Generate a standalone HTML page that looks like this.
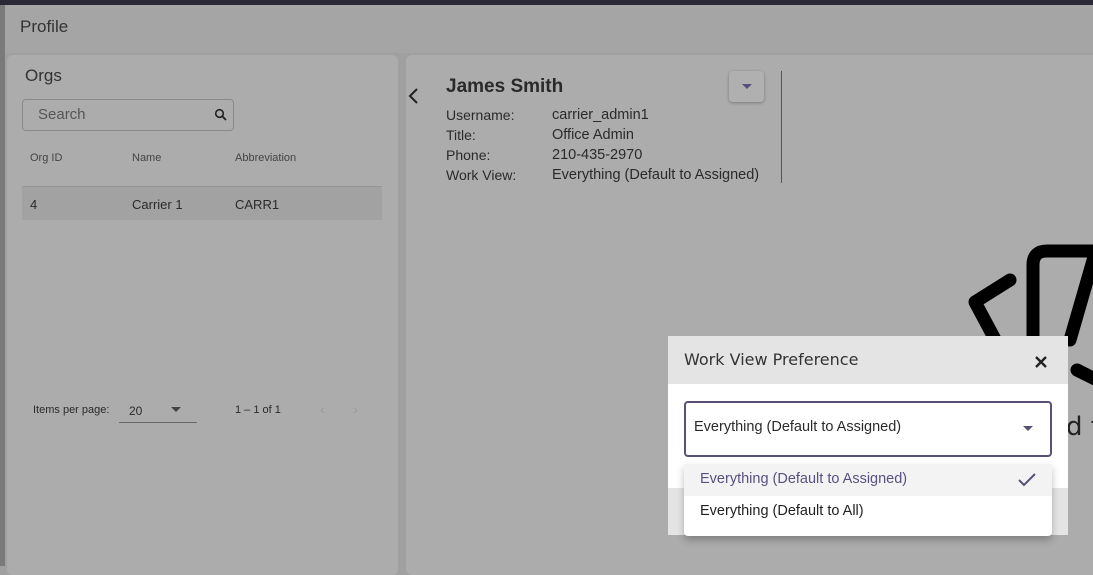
<!DOCTYPE html>
<html><head><style>
body{margin:0;width:1093px;height:566px;overflow:hidden;background:#a0a0a0;font-family:"Liberation Sans",sans-serif;position:relative;color:#2a2a2a}
.a{position:absolute;white-space:nowrap}
.s{font-family:"DejaVu Sans","Liberation Sans",sans-serif}
</style></head><body>
<div class="a" style="left:0;top:0;width:1093px;height:5px;background:#2b2838"></div>
<div class="a" style="left:0;top:5px;width:5px;height:561px;background:#7a7a7a"></div>
<div class="a" style="left:5px;top:5px;width:1088px;height:48px;background:#a5a5a5"></div>
<div class="a" style="left:20px;top:17px;font-size:17px;color:#333">Profile</div>
<div class="a" style="left:7px;top:55px;width:391px;height:520px;background:#acacac;border-radius:6px"></div>
<div class="a" style="left:25px;top:66px;font-size:17px;color:#333">Orgs</div>
<div class="a" style="left:22px;top:99px;width:210px;height:30px;border:1px solid #8a8a8a;border-radius:4px"></div>
<div class="a" style="left:38px;top:106px;font-size:15px;color:#555">Search</div>
<svg class="a" style="left:214px;top:108px" width="14" height="14" viewBox="0 0 14 14"><circle cx="5.5" cy="5.5" r="3.8" fill="none" stroke="#222" stroke-width="1.6"/><path d="M8.3 8.3L12 12" stroke="#222" stroke-width="1.8"/></svg>
<div class="a" style="left:30px;top:152px;font-size:11px;color:#444">Org ID</div>
<div class="a" style="left:132px;top:152px;font-size:11px;color:#444">Name</div>
<div class="a" style="left:235px;top:152px;font-size:11px;color:#444">Abbreviation</div>
<div class="a" style="left:22px;top:186px;width:360px;height:33px;background:#a2a2a2;border-top:1px solid #959595"></div>
<div class="a" style="left:30px;top:197px;font-size:13px">4</div>
<div class="a" style="left:132px;top:197px;font-size:13px">Carrier 1</div>
<div class="a" style="left:235px;top:197px;font-size:13px">CARR1</div>
<div class="a" style="left:33px;top:404px;font-size:11px">Items per page:</div>
<div class="a" style="left:129px;top:404px;font-size:12px">20</div>
<div class="a" style="left:171px;top:407px;width:0;height:0;border-left:5px solid transparent;border-right:5px solid transparent;border-top:5px solid #444"></div>
<div class="a" style="left:119px;top:422px;width:78px;height:1px;background:#666"></div>
<div class="a" style="left:235px;top:404px;font-size:11px">1 – 1 of 1</div>
<div class="a" style="left:320px;top:401px;font-size:14px;color:#999">‹</div>
<div class="a" style="left:353px;top:401px;font-size:14px;color:#999">›</div>
<div class="a" style="left:406px;top:55px;width:700px;height:520px;background:#acacac;border-radius:6px"></div>
<svg class="a" style="left:406px;top:86px" width="14" height="20"><path d="M11 3L4 10L11 17" fill="none" stroke="#222" stroke-width="2"/></svg>
<div class="a" style="left:446px;top:76px;font-size:19px;font-weight:bold;color:#2a2a2a">James Smith</div>
<div class="a" style="left:446px;top:105px;font-size:14px;line-height:20px">Username:<br>Title:<br>Phone:<br>Work View:</div>
<div class="a" style="left:552px;top:105px;font-size:14.5px;line-height:20px">carrier_admin1<br>Office Admin<br>210-435-2970<br>Everything (Default to Assigned)</div>
<div class="a" style="left:729px;top:71px;width:35px;height:31px;background:#b0b0b0;border-radius:4px;box-shadow:0 1px 3px rgba(0,0,0,.3)"></div>
<div class="a" style="left:742px;top:84px;border-left:5px solid transparent;border-right:5px solid transparent;border-top:5px solid #5a5077"></div>
<div class="a" style="left:781px;top:71px;width:1px;height:112px;background:#555"></div>
<svg class="a" style="left:940px;top:230px" width="153" height="220"><g fill="none" stroke="#000" stroke-width="13" stroke-linecap="round" stroke-linejoin="round"><path d="M70 50L35 72L58 115"/><path d="M93 115V35Q93 21 107 21H165"/><path d="M156 20L130 110"/><path d="M137 140L165 154"/></g></svg>
<div class="a s" style="left:1066px;top:412px;font-size:26px;color:#222">d f</div>
<div class="a" style="left:668px;top:336px;width:400px;height:199px;background:#fff"></div>
<div class="a" style="left:668px;top:336px;width:400px;height:48px;background:#e4e4e4"></div>
<div class="a" style="left:668px;top:488px;width:400px;height:47px;background:#e4e4e4"></div>
<div class="a s" style="left:684px;top:350px;font-size:16px;color:#333">Work View Preference</div>
<svg class="a" style="left:1033px;top:354px" width="16" height="16"><path d="M3 3L13 13M13 3L3 13" stroke="#222" stroke-width="2.4"/></svg>
<div class="a" style="left:684px;top:401px;width:364px;height:52px;border:2px solid #5a5077;border-radius:4px;background:#fff"></div>
<div class="a" style="left:694px;top:419px;font-size:14.5px">Everything (Default to Assigned)</div>
<div class="a" style="left:1023px;top:426px;border-left:5px solid transparent;border-right:5px solid transparent;border-top:5px solid #5a5077"></div>
<div class="a" style="left:684px;top:464px;width:368px;height:72px;background:#fff;border-radius:0 0 4px 4px;box-shadow:0 4px 8px rgba(0,0,0,.25)"></div>
<div class="a" style="left:684px;top:464px;width:368px;height:32px;background:#f3f3f3"></div>
<div class="a" style="left:700px;top:471px;font-size:14.5px;color:#5a5080">Everything (Default to Assigned)</div>
<svg class="a" style="left:1017px;top:472px" width="20" height="16"><path d="M2 8L7 13L18 2" fill="none" stroke="#5a5077" stroke-width="2"/></svg>
<div class="a" style="left:700px;top:503px;font-size:14.5px;color:#222">Everything (Default to All)</div>
</body></html>
